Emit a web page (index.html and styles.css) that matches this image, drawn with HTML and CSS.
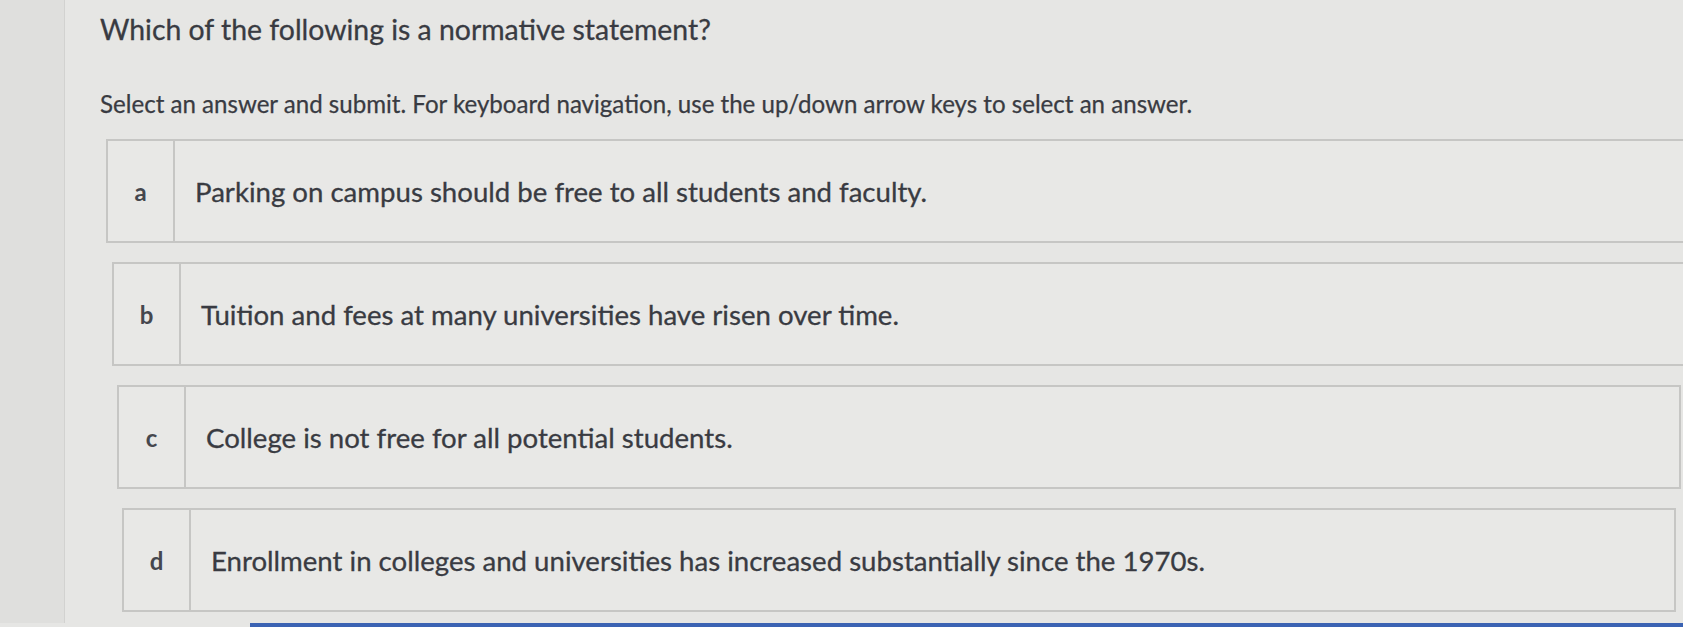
FILE: index.html
```html
<!DOCTYPE html>
<html lang="en">
<head>
<meta charset="utf-8">
<title>Question</title>
<link rel="stylesheet" href="styles.css">
</head>
<body>
<div class="screen">
  <div class="side"></div>
  <main class="main">
    <h1 class="question">Which of the following is a normative statement?</h1>
    <p class="instructions">Select an answer and submit. For keyboard navigation, use the up/down arrow keys to select an answer.</p>
    <div class="options">
      <div class="option opt-a"><div class="letter">a</div><div class="text">Parking on campus should be free to all students and faculty.</div></div>
      <div class="option opt-b"><div class="letter">b</div><div class="text">Tuition and fees at many universities have risen over time.</div></div>
      <div class="option opt-c"><div class="letter">c</div><div class="text">College is not free for all potential students.</div></div>
      <div class="option opt-d"><div class="letter">d</div><div class="text">Enrollment in colleges and universities has increased substantially since the 1970s.</div></div>
    </div>
  </main>
</div>
<div class="bottom-bar"></div>
</body>
</html>
```
FILE: styles.css
```css
html, body {
  margin: 0;
  padding: 0;
  height: 100%;
  overflow: hidden;
}
body {
  background: #e6e6e4;
  font-family: Lato, "Liberation Sans", sans-serif;
  color: #393b42;
  position: relative;
}
.screen {
  display: flex;
  height: 623px;
}
.side {
  width: 64px;
  flex: none;
  background: #dfdfdd;
  border-right: 1px solid #d2d2d0;
}
.main {
  flex: 1;
  padding: 11px 0 0 35px;
  min-width: 0;
}
.question {
  margin: 0;
  font-size: 28.4px;
  line-height: 36px;
  font-weight: 400;
  -webkit-text-stroke: 0.3px #393b42;
}
.instructions {
  margin: 42px 0 0;
  font-size: 24.1px;
  line-height: 30px;
  -webkit-text-stroke: 0.25px #393b42;
}
.options {
  margin-top: 20px;
  display: flex;
  flex-direction: column;
  gap: 19px;
}
.option {
  display: flex;
  height: 104px;
  box-sizing: border-box;
  border: 2px solid #c6c6c4;
  background: #e8e8e6;
}
.opt-a { margin: 0 -20px 0 6px; }
.opt-b { margin: 0 -6px 0 12px; }
.opt-c { margin: 0 2px 0 17px; }
.opt-d { margin: 0 7px 0 22px; }
.letter {
  width: 65px;
  flex: none;
  display: flex;
  align-items: center;
  justify-content: center;
  border-right: 2px solid #c6c6c4;
  font-size: 24px;
  font-weight: 700;
  color: #45474e;
}
.text {
  display: flex;
  align-items: center;
  padding-left: 20px;
  font-size: 27.6px;
  -webkit-text-stroke: 0.3px #393b42;
}
.bottom-bar {
  position: absolute;
  left: 250px;
  right: 0;
  bottom: 0;
  height: 4px;
  background: #3b63b3;
}
```
